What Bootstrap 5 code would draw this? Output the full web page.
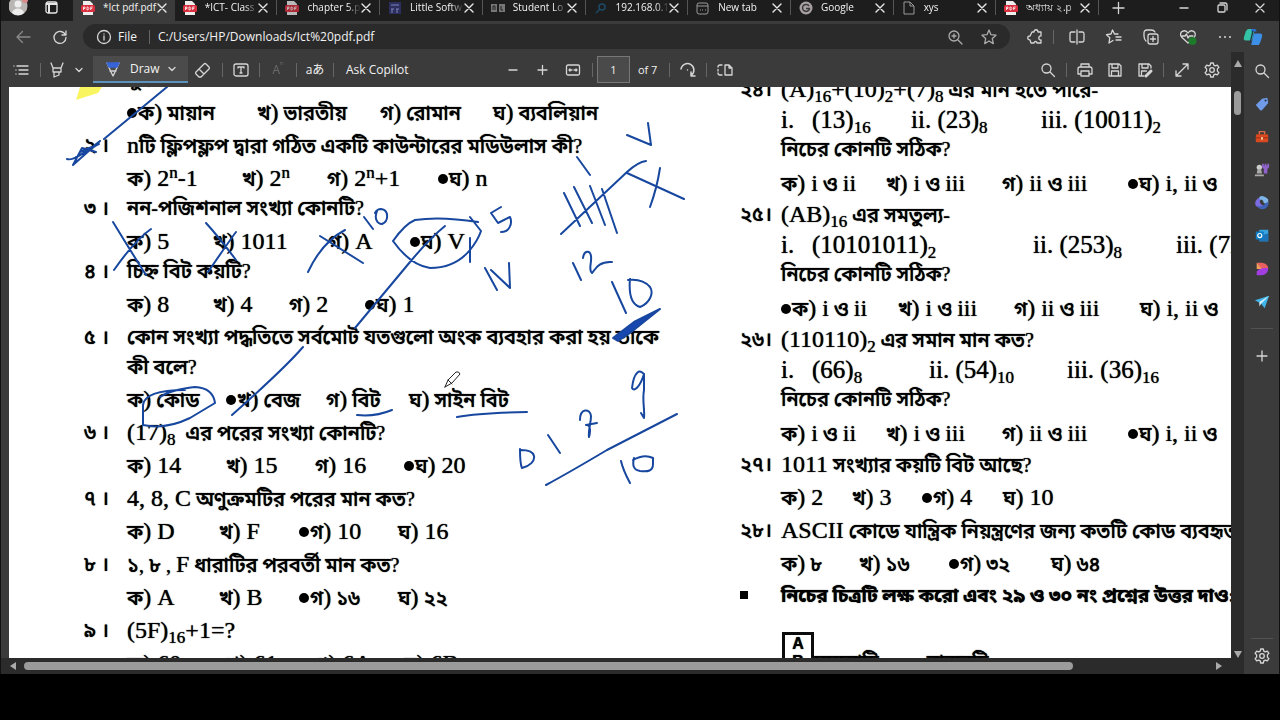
<!DOCTYPE html>
<html lang="bn">
<head>
<meta charset="utf-8">
<meta name="viewport" content="width=device-width, initial-scale=1">
<title>Ict pdf.pdf</title>
<link href="https://cdn.jsdelivr.net/npm/bootstrap@5.3.0/dist/css/bootstrap.min.css" rel="stylesheet">
<style>
body{background:#000;color:#f2f2f2;font:12px/16px "Open Sans","Noto Sans",sans-serif;overflow:hidden}
svg{display:block;flex:none}
.ic{width:18px;height:18px;fill:none;stroke:#d6d6d6;stroke-width:1.3;stroke-linecap:round;stroke-linejoin:round}
.window{height:calc(100vh - 46px);background:#3b3b3b;border-left:1px solid #111;border-right:1px solid #111}
.plain{border:0;background:none;padding:0;color:inherit;display:flex;align-items:center;justify-content:center}
/* tab strip */
.strip{height:21px;background:#1d1d1d}
.strip-row{height:15px;width:72px}
.tabset{flex:0 1 1026px;min-width:0}
.tab{flex:1 1 0;min-width:0;height:21px;padding:0 8px 6px 8px}
.tab.active{background:#3b3b3b}
.tab a{flex:1 1 0;min-width:0;color:#f2f2f2;text-decoration:none;white-space:nowrap;overflow:hidden;font-size:10px;line-height:15px;-webkit-mask-image:linear-gradient(90deg,#000 75%,transparent)}
.tab.active a{-webkit-mask-image:none}
.tab .ic-tab{width:14px;height:14px;margin-right:8px}
.tab .ic-x{width:10px;height:10px;stroke:#e8e8e8;stroke-width:1.4}
.tick{width:1px;height:15px;background:#555;flex:none}
.winbtn{width:38px;height:15px}
/* address row */
.addr{height:31px;padding-left:3px}
.b37{width:37px;height:26px}
.omni{background:#2a2a2a;border-radius:13px;height:25px;margin:0 6px 0 5px;padding:0 12px 0 13px}
.omni input{background:none;border:0;color:#f2f2f2;outline:0;padding:0;min-width:0}
.vr1{width:1px;height:14px;background:#666;flex:none}
/* pdf tools */
.tools{height:35px}
.tools .b30{width:30px;height:28px}
.tools .b28{width:28px;height:28px}
.tools .b24{width:24px;height:28px}
.tools .b20{width:20px;height:28px}
.side-l{flex:1 1 0;padding-left:5px}
.side-r{flex:1 1 0;padding-right:4px}
.side-r .vr1{margin:0 3px}
.drawbtn{width:95px;height:27px;margin-left:4px;background:#4b4b4b;border-bottom:2px solid #5b93bd;padding-left:11px}
.drawbtn span{width:38px;text-align:left;margin-left:8px}
.pg{width:33px;height:27px;background:#4a4a4a;border:1px solid #777;color:#eee;text-align:center;padding:0;font-size:11px}
.pg-of{font-size:11px}
.aa{font-family:"Open Sans","Noto Sans CJK JP",sans-serif}
.chev{width:8px;height:8px}
/* document */
.sheet{background:#fff;color:#000;margin-left:8px;overflow:hidden;font-family:"Liberation Serif","Noto Sans Bengali",serif;font-size:20px;font-weight:500;text-shadow:0 0 1px #000;white-space:nowrap;position:relative}
.sheet i{font-style:normal;font-size:24px}
.sheet sub,.sheet sup{font-family:"Liberation Serif",serif;font-size:17px;line-height:0}
.sheet sub{bottom:-5px}
.sheet sup{top:-8px}
.colL{padding-left:75px;width:731px;margin-top:-23px;flex:none}
.colR{min-width:0;margin-top:-13px;flex:1 1 0}
.item{display:grid;grid-template-columns:43px 1fr}
.colR .item{grid-template-columns:41px 1fr}
.loose{margin-bottom:3px}
.q{height:30px;line-height:30px}
.s{height:29px;line-height:30px}
.o{height:33px;line-height:30px;padding-top:3px;display:grid}
.colR .rom{display:grid;height:30px;line-height:32px}
.colR .rom i{font-size:25px}
.colR .rom b{font-weight:inherit;display:inline-block;width:31px}
.colR .o{height:36px;line-height:30px;padding-top:5px}
.colR .tight .o{padding-top:3px}
.g1{grid-template-columns:130px 123px 113px 1fr;margin-left:43px}
.g2{grid-template-columns:115px 85px 111px 1fr}
.g3{grid-template-columns:86px 115px 82px 1fr}
.g4{grid-template-columns:86px 76px 76px 1fr}
.g5{grid-template-columns:99px 100px 83px 1fr}
.g6{grid-template-columns:99px 89px 89px 1fr}
.g7{grid-template-columns:92px 80px 99px 1fr}
.h1r{grid-template-columns:130px 130px 1fr}
.h2r{grid-template-columns:252px 143px 1fr}
.h3r{grid-template-columns:148px 138px 1fr}
.k1{grid-template-columns:105px 116px 126px 1fr}
.k2{grid-template-columns:117px 116px 126px 1fr}
.k3{grid-template-columns:71px 70px 81px 1fr}
.k4{grid-template-columns:78px 90px 102px 1fr}
.dot::before{content:"";display:inline-block;width:10px;height:10px;margin-right:1px;border-radius:50%;background:#000;vertical-align:2px}
.thick{font-weight:700;font-size:19px}
.sq::before{content:"";display:inline-block;width:8px;height:8px;background:#000;vertical-align:3px}
.fig{margin:21px 0 0 42px}
.fig span{margin-top:10px;line-height:40px}
.boxA{width:32px;height:60px;border:3px solid #0c0c0c;font:700 16px/18px "Liberation Sans",sans-serif;text-align:center}
.ink{position:absolute;left:0;top:0}
.ink path{fill:none;stroke:#17479e;stroke-width:2;stroke-linecap:round;stroke-linejoin:round}
/* scroll bars and side bar */
.vbar{width:13px;background:#2b2b2b}
.vthumb{width:7px;height:24px;border-radius:4px;background:#9b9b9b}
.hbar{height:16px;background:#2b2b2b;padding:0 5px}
.hthumb{flex:0 1 1049px;height:8px;border-radius:4px;background:#9b9b9b;margin-left:7px}
.side{width:35px;padding:2px 0}
.side .plain{width:35px;height:33px}
.side hr{width:22px;margin:10px 0;border-color:#999}
</style>
</head>
<body>
<svg width="0" height="0" class="position-absolute" aria-hidden="true">
<symbol id="x" viewBox="0 0 10 10"><path d="M1 1l8 8M9 1l-8 8"/></symbol>
<symbol id="pdf" viewBox="0 0 14 14"><path d="M2 0h7l3 3v11H2z" fill="#eee" stroke="none"/><rect x="0" y="4" width="14" height="7" rx="1.5" fill="#d92f3f" stroke="none"/><path d="M2.500 9V6h1.500v1.500H2.500M6 9V6c2.500 0 2.500 3 0 3M9.700 9V6h2M9.700 7.500h1.500" stroke="#fff" stroke-width=".8" fill="none"/></symbol>
<symbol id="cd" viewBox="0 0 8 8"><path d="M1 2.500l3 3 3-3"/></symbol>
<symbol id="gear" viewBox="0 0 18 18"><circle cx="9" cy="9" r="2.300"/><path d="M7.700 2h2.600l.5 2.100 1.500.8 2-.8 1.600 2.200-1.500 1.600v2.200l1.500 1.600-1.600 2.200-2-.8-1.500.8-.5 2.100H7.700l-.5-2.100-1.500-.8-2 .8-1.600-2.200 1.500-1.600V7.900L2.100 6.300l1.600-2.200 2 .8 1.500-.8z"/></symbol>
<symbol id="mag" viewBox="0 0 18 18"><circle cx="7.500" cy="7.500" r="4.500"/><path d="M11 11l4.500 4.500"/></symbol>
</svg>
<div class="window d-flex flex-column">
<header>
<div class="strip d-flex">
<div class="d-flex flex-shrink-0 strip-row">
<svg width="20" height="16" class="ms-2 me-3" viewBox="0 0 20 16"><circle cx="9" cy="6" r="9.500" fill="#b9b5b3"/><circle cx="9" cy="4" r="3.500" fill="#eee"/><path d="M3 13c1-6 11-6 12 0-4 3-8 3-12 0z" fill="#eee"/><circle cx="16" cy="0" r="3" fill="#d98a8a"/></svg>
<svg width="13" height="14" viewBox="0 0 13 14" fill="none" stroke="#e6e6e6" stroke-width="1.300"><rect x="1" y="2" width="11" height="11" rx="2"/><path d="M1 4h11M4 4v9" stroke-width="2"/></svg>
</div>
<nav class="tabset d-flex" aria-label="Tabs">
<div class="tab active d-flex align-items-center"><svg class="ic-tab"><use href="#pdf"/></svg><a href="#">*Ict pdf.pdf</a><button class="plain" aria-label="Close"><svg class="ic ic-x"><use href="#x"/></svg></button></div>
<div class="tab d-flex align-items-center"><svg class="ic-tab"><use href="#pdf"/></svg><a href="#">*ICT- Class</a><button class="plain" aria-label="Close"><svg class="ic ic-x"><use href="#x"/></svg></button></div><span class="tick"></span>
<div class="tab d-flex align-items-center"><svg class="ic-tab opacity-75"><use href="#pdf"/></svg><a href="#">chapter 5.p</a><button class="plain" aria-label="Close"><svg class="ic ic-x"><use href="#x"/></svg></button></div><span class="tick"></span>
<div class="tab d-flex align-items-center"><svg class="ic-tab" viewBox="0 0 14 14"><path d="M1 1h12v12H1z" fill="#2c2f5e"/><path d="M3 4h8M3 8h3M8 8h3M4 8v4M9 8v4" stroke="#7c82b8"/></svg><a href="#">Little Softw</a><button class="plain" aria-label="Close"><svg class="ic ic-x"><use href="#x"/></svg></button></div><span class="tick"></span>
<div class="tab d-flex align-items-center"><svg class="ic-tab" viewBox="0 0 14 14"><path d="M0 3h6v8H0zM8 3h6v8H8z" fill="#777"/><path d="M2 9V5h2v4M10 5v4h2" stroke="#222" fill="none"/></svg><a href="#">Student Lo</a><button class="plain" aria-label="Close"><svg class="ic ic-x"><use href="#x"/></svg></button></div><span class="tick"></span>
<div class="tab d-flex align-items-center"><svg class="ic-tab" viewBox="0 0 14 14" fill="none" stroke="#1d4a68" stroke-width="1.500"><circle cx="8" cy="6" r="3"/><path d="M6 8l-4 4"/></svg><a href="#">192.168.0.1</a><button class="plain" aria-label="Close"><svg class="ic ic-x"><use href="#x"/></svg></button></div><span class="tick"></span>
<div class="tab d-flex align-items-center"><svg class="ic-tab" viewBox="0 0 14 14" fill="none" stroke="#999"><rect x="1" y="2" width="11" height="11" rx="2"/><path d="M1 5h11M4 9h1M6 9h1M9 9h1"/></svg><a href="#">New tab</a><button class="plain" aria-label="Close"><svg class="ic ic-x"><use href="#x"/></svg></button></div><span class="tick"></span>
<div class="tab d-flex align-items-center"><svg class="ic-tab" viewBox="0 0 14 14"><circle cx="7" cy="7" r="6.500" fill="#a9a0a4"/><path d="M10 5a3.500 3.500 0 1 0 .5 2.500H7" fill="none" stroke="#3b3b3b" stroke-width="1.500"/></svg><a href="#">Google</a><button class="plain" aria-label="Close"><svg class="ic ic-x"><use href="#x"/></svg></button></div><span class="tick"></span>
<div class="tab d-flex align-items-center"><svg class="ic-tab" viewBox="0 0 14 14" fill="none" stroke="#999"><path d="M2 1h6l4 4v8H2zM8 1v4h4"/></svg><a href="#">xys</a><button class="plain" aria-label="Close"><svg class="ic ic-x"><use href="#x"/></svg></button></div><span class="tick"></span>
<div class="tab d-flex align-items-center"><svg class="ic-tab"><use href="#pdf"/></svg><a href="#">অধ্যায় ২.p</a><button class="plain" aria-label="Close"><svg class="ic ic-x"><use href="#x"/></svg></button></div><span class="tick"></span>
</nav>
<button class="plain winbtn" aria-label="New tab"><svg class="ic" viewBox="0 0 18 18"><path d="M4 9h11M9.500 3.500v11"/></svg></button>
<div class="d-flex ms-auto">
<button class="plain winbtn" aria-label="Minimize"><svg class="ic" viewBox="0 0 18 18"><path d="M5 9h8"/></svg></button>
<button class="plain winbtn" aria-label="Restore"><svg class="ic" viewBox="0 0 18 18"><rect x="5" y="6" width="7" height="7" rx="1"/><path d="M7 4h5q2 0 2 2v5"/></svg></button>
<button class="plain winbtn" aria-label="Close window"><svg class="ic" viewBox="0 0 18 18"><path d="M5 5l8 8M13 5l-8 8"/></svg></button>
</div>
</div>
<div class="addr d-flex align-items-center">
<button class="plain b37" aria-label="Back"><svg class="ic opacity-50" viewBox="0 0 18 18"><path d="M3 9h13M8.500 3.500L3 9l5.500 5.500"/></svg></button>
<button class="plain b37" aria-label="Refresh"><svg class="ic" viewBox="0 0 18 18"><path d="M14.500 7A6 6 0 1 0 15 9.500M15 3v4h-4"/></svg></button>
<div class="omni d-flex align-items-center flex-grow-1">
<svg class="ic me-1" viewBox="0 0 18 18"><circle cx="8" cy="9" r="6.500"/><path d="M8 8v4M8 6v0"/></svg>
<label for="url" class="me-2">File</label><span class="vr1 me-2 ms-1"></span>
<input id="url" class="flex-grow-1" value="C:/Users/HP/Downloads/Ict%20pdf.pdf">
<button class="plain me-3" aria-label="Zoom"><svg class="ic opacity-75" viewBox="0 0 18 18"><circle cx="8" cy="8" r="5"/><path d="M12 12l4 4M8 6v4M6 8h4"/></svg></button>
<button class="plain" aria-label="Favourite"><svg class="ic opacity-75" viewBox="0 0 18 18"><path d="M9 2l2 4.700 5 .5-3.700 3.400 1 5L9 13l-4.300 2.600 1-5L2 7.200l5-.5z"/></svg></button>
</div>
<button class="plain b37" aria-label="Extensions"><svg class="ic" viewBox="0 0 18 18"><path d="M6 4h2c0-3 4-3 4 0h3v4c-3-.5-3 4.500 0 4v3h-4c0-2-3-2-3 0H5l-1-3C1 12 1 8 4 8z"/></svg></button>
<span class="vr1 me-1"></span>
<button class="plain b37" aria-label="Split screen"><svg class="ic" viewBox="0 0 18 18"><path d="M7 4H3.500Q2 4 2 6v6q0 2 1.500 2H7M11 4h3.500Q16 4 16 6v6q0 2-1.500 2H11M9 2v14"/></svg></button>
<button class="plain b37" aria-label="Favourites"><svg class="ic" viewBox="0 0 18 18"><path d="M13 6H9.500L7.500 2 6 6l-4.500.7 3.300 3L4 15l4-2.500M11 9h5M11 12h5"/></svg></button>
<button class="plain b37" aria-label="Collections"><svg class="ic" viewBox="0 0 18 18"><rect x="6" y="6" width="10" height="10" rx="2"/><path d="M4 13Q2 11 2 8V5q0-3 3-3h4q3 0 4 2M11 8.500v5M8.500 11h5"/></svg></button>
<button class="plain b37" aria-label="Essentials"><svg class="ic" viewBox="0 0 18 18"><path d="M9 15L2.500 9C-1 4 6 .5 9 5c3-4.500 9.500-1 6.500 4zM3 8h3l1.500-2L9 10l1.500-2H14"/><circle cx="13.500" cy="13" r="4" fill="#1d7a2a" stroke="none"/></svg></button>
<button class="plain b37" aria-label="More"><svg class="ic" viewBox="0 0 18 18"><path d="M4 9v0M9 9v0M14 9v0" stroke-width="2"/></svg></button>
<button class="plain pe-3" aria-label="Copilot"><svg width="20" height="18" viewBox="0 0 22 20"><path d="M6 1h7l-3 13H3Q0 14 1 10L3 4q1-3 3-3z" fill="#33c2a5"/><path d="M9 1h4q2 0 2 3H9z" fill="#2a74d8"/><path d="M16 19H9l3-13h7q3 0 2 4l-2 6q-1 3-3 3z" fill="#3d8fe6"/><path d="M11 3l-3 13" stroke="#26324a" stroke-width="1.500"/></svg></button>
</div>
</header>
<div class="d-flex flex-grow-1 overflow-hidden">
<div class="d-flex flex-column flex-grow-1 overflow-hidden">
<div class="tools d-flex align-items-center flex-shrink-0">
<div class="d-flex align-items-center side-l">
<button class="plain b30" aria-label="Contents"><svg class="ic" viewBox="0 0 18 18"><path d="M5 5h11M7 9h9M7 13h9M2 5v0M4 9v0M4 13v0"/></svg></button><span class="vr1 mx-1"></span>
<button class="plain b24" aria-label="Highlight"><svg class="ic" viewBox="0 0 18 18"><path d="M3 2l2 5v4h8V7l2-5M5 7h8M6 11v5l5-2v-3"/></svg></button>
<button class="plain b20" aria-label="Highlight options"><svg class="ic chev"><use href="#cd"/></svg></button>
<button class="plain drawbtn justify-content-start"><svg class="ic" viewBox="0 0 18 18"><path d="M3 3l4 9 2 4 2-4 4-9M6 11h6"/><path d="M3 3h12l-2 4H5z" fill="#3764d8" stroke="#3764d8"/></svg><span>Draw</span><svg class="ic chev"><use href="#cd"/></svg></button>
<button class="plain b30" aria-label="Erase"><svg class="ic" viewBox="0 0 18 18"><path d="M2 11l8-8q1-1 2 0l3 3q1 1 0 2l-8 8H5l-3-3q-1-1 0-2zM5 8l5 5"/></svg></button><span class="vr1 mx-1"></span>
<button class="plain b28" aria-label="Add text"><svg class="ic" viewBox="0 0 18 18"><rect x="2" y="3" width="14" height="12" rx="2"/><path d="M6 7V6h6v1M9 6v6M8 12h2"/></svg></button><span class="vr1 mx-1"></span>
<button class="plain b28 opacity-25" aria-label="Read aloud">A<sup>&#8319;</sup></button><span class="vr1 mx-1"></span>
<button class="plain b28 aa" aria-label="Translate">aあ</button><span class="vr1 mx-1"></span>
<button class="plain ms-2">Ask Copilot</button>
</div>
<div class="d-flex align-items-center ms-1">
<button class="plain b30" aria-label="Zoom out"><svg class="ic" viewBox="0 0 18 18"><path d="M5 9h8"/></svg></button>
<button class="plain b30" aria-label="Zoom in"><svg class="ic" viewBox="0 0 18 18"><path d="M4 9h9M8.500 4.500v9"/></svg></button>
<button class="plain b30" aria-label="Fit width"><svg class="ic" viewBox="0 0 18 18"><rect x="2.500" y="4" width="13" height="10" rx="1.500"/><path d="M5 9h3M10 9h3M6 8L5 9l1 1M12 8l1 1-1 1"/></svg></button><span class="vr1 mx-1"></span>
<input class="pg" value="1" aria-label="Page"><span class="ms-2 me-2 pg-of">of 7</span><span class="vr1 mx-1"></span>
<button class="plain b28" aria-label="Rotate"><svg class="ic" viewBox="0 0 18 18"><path d="M2 8A6.500 6.500 0 1 1 12 14.500M12 11v4h4M8.500 9v0" stroke-width="1.500"/></svg></button><span class="vr1 mx-1"></span>
<button class="plain b28" aria-label="Page view"><svg class="ic" viewBox="0 0 18 18"><path d="M9 4h4l3 3v7H9zM13 4v3h3M6 4H4Q2 4 2 6M2 8.500v1.500M2 12q0 2 2 2h2"/></svg></button>
</div>
<div class="d-flex align-items-center justify-content-end side-r">
<button class="plain b30" aria-label="Search"><svg class="ic"><use href="#mag"/></svg></button><span class="vr1"></span>
<button class="plain b30" aria-label="Print"><svg class="ic" viewBox="0 0 18 18"><path d="M5 6V3h8v3M5 13H2V8q0-2 2-2h10q2 0 2 2v5h-3M5 10h8v5H5z"/></svg></button>
<button class="plain b30" aria-label="Save"><svg class="ic" viewBox="0 0 18 18"><path d="M3 3h10l2 2v10H3zM6 3v4h6V3M5.500 15v-5h7v5"/></svg></button>
<button class="plain b30" aria-label="Save as"><svg class="ic" viewBox="0 0 18 18"><path d="M8 15H3V3h10l2 2v2M6 3v4h6V3M5.500 15v-5h5"/><path d="M10 15l5-5" stroke-width="3"/></svg></button><span class="vr1"></span>
<button class="plain b30" aria-label="Full screen"><svg class="ic" viewBox="0 0 18 18"><path d="M3 15L15 3M10 3h5v5M3 10v5h5"/></svg></button>
<button class="plain b30" aria-label="Settings"><svg class="ic"><use href="#gear"/></svg></button>
</div>
</div>
<main class="sheet d-flex flex-grow-1 align-items-start">
<section class="colL">
<div class="item"><span></span><div class="q">মু য়</div></div>
<div class="o g1 loose"><span class="dot">ক<i>)</i> মায়ান</span><span>খ<i>)</i> ভারতীয়</span><span>গ<i>)</i> রোমান</span><span>ঘ<i>)</i> ব্যবলিয়ান</span></div>
<div class="item"><span class="q">২ ।</span><div><div class="q"><i>n</i>টি ফ্লিপফ্লপ দ্বারা গঠিত একটি কাউন্টারের মডিউলাস কী?</div><div class="o g2"><span>ক<i>) 2</i><sup>n</sup><i>-1</i></span><span>খ<i>) 2</i><sup>n</sup></span><span>গ<i>) 2</i><sup>n</sup><i>+1</i></span><span class="dot">ঘ<i>) n</i></span></div></div></div>
<div class="item"><span class="q">৩ ।</span><div><div class="q">নন-পজিশনাল সংখ্যা কোনটি?</div><div class="o g3"><span>ক<i>) 5</i></span><span>খ<i>) 1011</i></span><span>গ<i>) A</i></span><span class="dot">ঘ<i>) V</i></span></div></div></div>
<div class="item loose"><span class="q">৪ ।</span><div><div class="q">চিহ্ন বিট কয়টি?</div><div class="o g4"><span>ক<i>) 8</i></span><span>খ<i>) 4</i></span><span>গ<i>) 2</i></span><span class="dot">ঘ<i>) 1</i></span></div></div></div>
<div class="item loose"><span class="q">৫ ।</span><div><div class="q">কোন সংখ্যা পদ্ধতিতে সর্বমোট যতগুলো অংক ব্যবহার করা হয় তাকে</div><div class="s">কী বলে?</div><div class="o g5"><span>ক<i>)</i> কোড</span><span class="dot">খ<i>)</i> বেজ</span><span>গ<i>)</i> বিট</span><span>ঘ<i>)</i> সাইন বিট</span></div></div></div>
<div class="item loose"><span class="q">৬ ।</span><div><div class="q"><i>(17)</i><sub>8</sub>&nbsp; এর পরের সংখ্যা কোনটি?</div><div class="o g6"><span>ক<i>) 14</i></span><span>খ<i>) 15</i></span><span>গ<i>) 16</i></span><span class="dot">ঘ<i>) 20</i></span></div></div></div>
<div class="item loose"><span class="q">৭ ।</span><div><div class="q"><i>4, 8, C</i> অণুক্রমটির পরের মান কত?</div><div class="o g7"><span>ক<i>) D</i></span><span>খ<i>) F</i></span><span class="dot">গ<i>) 10</i></span><span>ঘ<i>) 16</i></span></div></div></div>
<div class="item loose"><span class="q">৮ ।</span><div><div class="q">১, ৮ , <i>F</i> ধারাটির পরবর্তী মান কত?</div><div class="o g7"><span>ক<i>) A</i></span><span>খ<i>) B</i></span><span class="dot">গ<i>)</i> ১৬</span><span>ঘ<i>)</i> ২২</span></div></div></div>
<div class="item"><span class="q">৯ ।</span><div><div class="q"><i>(5F)</i><sub>16</sub><i>+1=?</i></div><div class="o g6"><span>ক<i>) 60</i></span><span>খ<i>) 61</i></span><span>গ<i>) 6A</i></span><span>ঘ<i>) 6B</i></span></div></div></div>
</section>
<section class="colR">
<div class="item"><span class="q">২৪।</span><div><div class="q"><i>(A)</i><sub>16</sub><i>+(10)</i><sub>2</sub><i>+(7)</i><sub>8</sub> এর মান হতে পারে-</div><div class="rom h1r"><span><i><b>i.</b>(13)</i><sub>16</sub></span><span><i>ii. (23)</i><sub>8</sub></span><span><i>iii. (10011)</i><sub>2</sub></span></div><div class="s">নিচের কোনটি সঠিক?</div><div class="o k1"><span>ক<i>) i</i> ও <i>ii</i></span><span>খ<i>) i</i> ও <i>iii</i></span><span>গ<i>) ii</i> ও <i>iii</i></span><span class="dot">ঘ<i>) i, ii</i> ও</span></div></div></div>
<div class="item"><span class="q">২৫।</span><div><div class="q"><i>(AB)</i><sub>16</sub> এর সমতুল্য-</div><div class="rom h2r"><span><i><b>i.</b>(10101011)</i><sub>2</sub></span><span><i>ii. (253)</i><sub>8</sub></span><span><i>iii. (7B)</i></span></div><div class="s">নিচের কোনটি সঠিক?</div><div class="o k2"><span class="dot">ক<i>) i</i> ও <i>ii</i></span><span>খ<i>) i</i> ও <i>iii</i></span><span>গ<i>) ii</i> ও <i>iii</i></span><span>ঘ<i>) i, ii</i> ও</span></div></div></div>
<div class="item"><span class="q">২৬।</span><div><div class="q"><i>(110110)</i><sub>2</sub> এর সমান মান কত?</div><div class="rom h3r"><span><i><b>i.</b>(66)</i><sub>8</sub></span><span><i>ii. (54)</i><sub>10</sub></span><span><i>iii. (36)</i><sub>16</sub></span></div><div class="s">নিচের কোনটি সঠিক?</div><div class="o k1"><span>ক<i>) i</i> ও <i>ii</i></span><span>খ<i>) i</i> ও <i>iii</i></span><span>গ<i>) ii</i> ও <i>iii</i></span><span class="dot">ঘ<i>) i, ii</i> ও</span></div></div></div>
<div class="item tight"><span class="q">২৭।</span><div><div class="q"><i>1011</i> সংখ্যার কয়টি বিট আছে?</div><div class="o k3"><span>ক<i>) 2</i></span><span>খ<i>) 3</i></span><span class="dot">গ<i>) 4</i></span><span>ঘ<i>) 10</i></span></div></div></div>
<div class="item tight"><span class="q">২৮।</span><div><div class="q"><i>ASCII</i> কোডে যান্ত্রিক নিয়ন্ত্রণের জন্য কতটি কোড ব্যবহৃত</div><div class="o k4"><span>ক<i>)</i> ৮</span><span>খ<i>)</i> ১৬</span><span class="dot">গ<i>)</i> ৩২</span><span>ঘ<i>)</i> ৬৪</span></div></div></div>
<div class="item thick"><span class="q sq"></span><div class="q">নিচের চিত্রটি লক্ষ করো এবং ২৯ ও ৩০ নং প্রশ্নের উত্তর দাও:</div></div>
<div class="fig d-flex"><div class="boxA">A<br>B</div><span>সমস্যাটি</span><span class="ms-5">বাস্তবটি</span></div>
</section>
<svg class="ink" width="1221" height="571" viewBox="9 87 1221 571" aria-hidden="true">
<path d="M80 87h22l-4 6-16 5-6 2z" style="fill:#f7f23a;stroke:none;opacity:.8"/>
<path d="M167 87L104 139M67 159Q74 162 100 141L73 165 82 148 96 152M76 157L99 144 80 152M113 222Q130 250 146 275M151 229Q135 240 114 270M206 223Q218 236 236 260M236 232Q230 240 208 272M320 236L363 263M345 230Q322 242 308 272M364 217L373 229M377 211C374 218 377 224 382 224C389 221 389 210 381 209C378 209 376 211 375 213M393 241Q405 224 415 220 440 216 478 222M470 217L481 231Q478 240 470 250 455 268 430 268 410 265 393 241M470 238V262M445 226Q430 238 410 262L355 328M303 347Q285 368 232 415M501 207L491 213L498 223L510 217C513 224 509 232 501 232M485 268L497 290M491 270L510 288 509 263M627 135L651 145 648 123M577 157L590 175M561 234L627 172Q638 162 646 161M564 193L580 226M574 187L592 223M590 186L605 225M602 189L617 233M627 173L684 199M660 168Q657 188 650 207M573 263L581 280M583 258C584 250 590 250 591 256C592 263 588 270 592 273C595 270 598 261 612 262M612 282L626 313M630 279C629 290 630 304 640 307C650 303 654 293 650 287C645 281 637 279 628 280M644 374C640 369 634 371 632 388C635 393 641 384 644 374V390C642 400 645 410 644 418L641 413M546 485Q570 472 607 450L677 414M580 420C580 408 590 408 591 416C591 424 588 430 589 437C591 430 590 424 586 425L597 423M548 435L560 453M520 449C520 458 521 466 522 468C530 466 535 461 534 456C533 451 528 450 521 450M621 461Q623 470 630 483M634 458C632 466 634 470 640 471C648 472 653 471 653 464V458C647 455 640 456 633 460M357 415Q375 417 392 410M457 417Q480 413 527 412M185 390Q145 390 143 405V425Q165 430 190 418L215 403Q213 388 195 387 170 390 160 397"/>
<path d="M613 338L634 322 660 309 630 333 618 341z" style="fill:#1747b0"/>
<path d="M445 387l3-7 8-8q3-1 4 2l-8 9-7 4zM448 380l4 4" style="fill:#fff;stroke:#222;stroke-width:1"/>
</svg>
</main>
<div class="hbar d-flex align-items-center flex-shrink-0"><svg width="7" height="8" class="ms-1" viewBox="0 0 7 8"><path d="M6 0v8L0 4z" fill="#aaa"/></svg><div class="hthumb"></div><svg width="7" height="8" class="ms-auto me-1" viewBox="0 0 7 8"><path d="M1 0v8l6-4z" fill="#aaa"/></svg></div>
</div>
<div class="vbar d-flex flex-column align-items-center py-2"><svg width="8" height="7" viewBox="0 0 8 7"><path d="M0 7h8L4 0z" fill="#aaa"/></svg><div class="vthumb mt-4"></div><svg width="8" height="7" class="mt-auto mb-2" viewBox="0 0 8 7"><path d="M0 0h8L4 7z" fill="#aaa"/></svg></div>
<aside class="side d-flex flex-column align-items-center">
<button class="plain" aria-label="Search sidebar"><svg class="ic"><use href="#mag"/></svg></button>
<button class="plain" aria-label="Shopping"><svg width="16" height="16" viewBox="0 0 18 18"><path d="M2 10l7-7 6-1 1 6-7 8q-2 1-3-1z" fill="#6f9be8"/><circle cx="13" cy="5" r="1.200" fill="#234"/></svg></button>
<button class="plain" aria-label="Tools"><svg width="16" height="16" viewBox="0 0 18 18"><path d="M6 6V3h6v3" fill="none" stroke="#d96b45" stroke-width="1.500"/><rect x="2" y="6" width="14" height="9" rx="1.500" fill="#d9481f"/><path d="M2 10h14" stroke="#8f2c10"/><path d="M8 9h2v3H8z" fill="#f7c9a0"/></svg></button>
<button class="plain" aria-label="Games"><svg width="16" height="16" viewBox="0 0 18 18"><path d="M9 2h2v2h1V2h2v2h1V2h2v4l-2 2v5h-4V8L9 6z" fill="#8f62c9"/><circle cx="6" cy="6" r="3" fill="#ccc"/><path d="M4 8h4l1 5H3zM1 14h10v2H1z" fill="#aaa"/></svg></button>
<button class="plain" aria-label="Microsoft 365"><svg width="16" height="16" viewBox="0 0 18 18"><path d="M8 1q5 0 8 4v6l-5-2q0-3-3-4L4 8q1-6 4-7z" fill="#7fb4e8"/><path d="M4 4q-4 4-2 8l6 4 3-4q-6-1-4-8z" fill="#7a6be0"/><path d="M16 8q1 6-5 8-5 0-7-4 6 2 9-3z" fill="#3d63b8"/></svg></button>
<button class="plain" aria-label="Outlook"><svg width="16" height="16" viewBox="0 0 18 18"><path d="M6 2h10v13H6z" fill="#39a5e0"/><path d="M6 9l10-3v9H6z" fill="#1d73b8"/><rect x="2" y="4" width="9" height="9" rx="1" fill="#0e7bc4"/><circle cx="6.500" cy="8.500" r="2.300" fill="none" stroke="#fff" stroke-width="1.300"/></svg></button>
<button class="plain" aria-label="Designer"><svg width="16" height="16" viewBox="0 0 18 18"><path d="M3 2h6q7 1 7 7H8z" fill="#e8605f"/><path d="M3 2l6 7H3z" fill="#f0a05a"/><path d="M16 8q0 8-8 8H3v-4q3-5 13-4z" fill="#a23de0"/></svg></button>
<button class="plain" aria-label="Telegram"><svg width="16" height="16" viewBox="0 0 18 18"><path d="M1 7l16-5-5 14-4-5z" fill="#3fb4e8"/><path d="M8 11l9-9-11 7v5z" fill="#d8f0fb"/></svg></button>
<hr>
<button class="plain" aria-label="Add"><svg class="ic" viewBox="0 0 18 18"><path d="M4 9h10M9 4v10"/></svg></button>
<hr class="mt-auto mb-0">
<button class="plain" aria-label="Sidebar settings"><svg class="ic"><use href="#gear"/></svg></button>
</aside>
</div>
</div>
<script src="https://cdn.jsdelivr.net/npm/bootstrap@5.3.0/dist/js/bootstrap.bundle.min.js"></script>
</body>
</html>
